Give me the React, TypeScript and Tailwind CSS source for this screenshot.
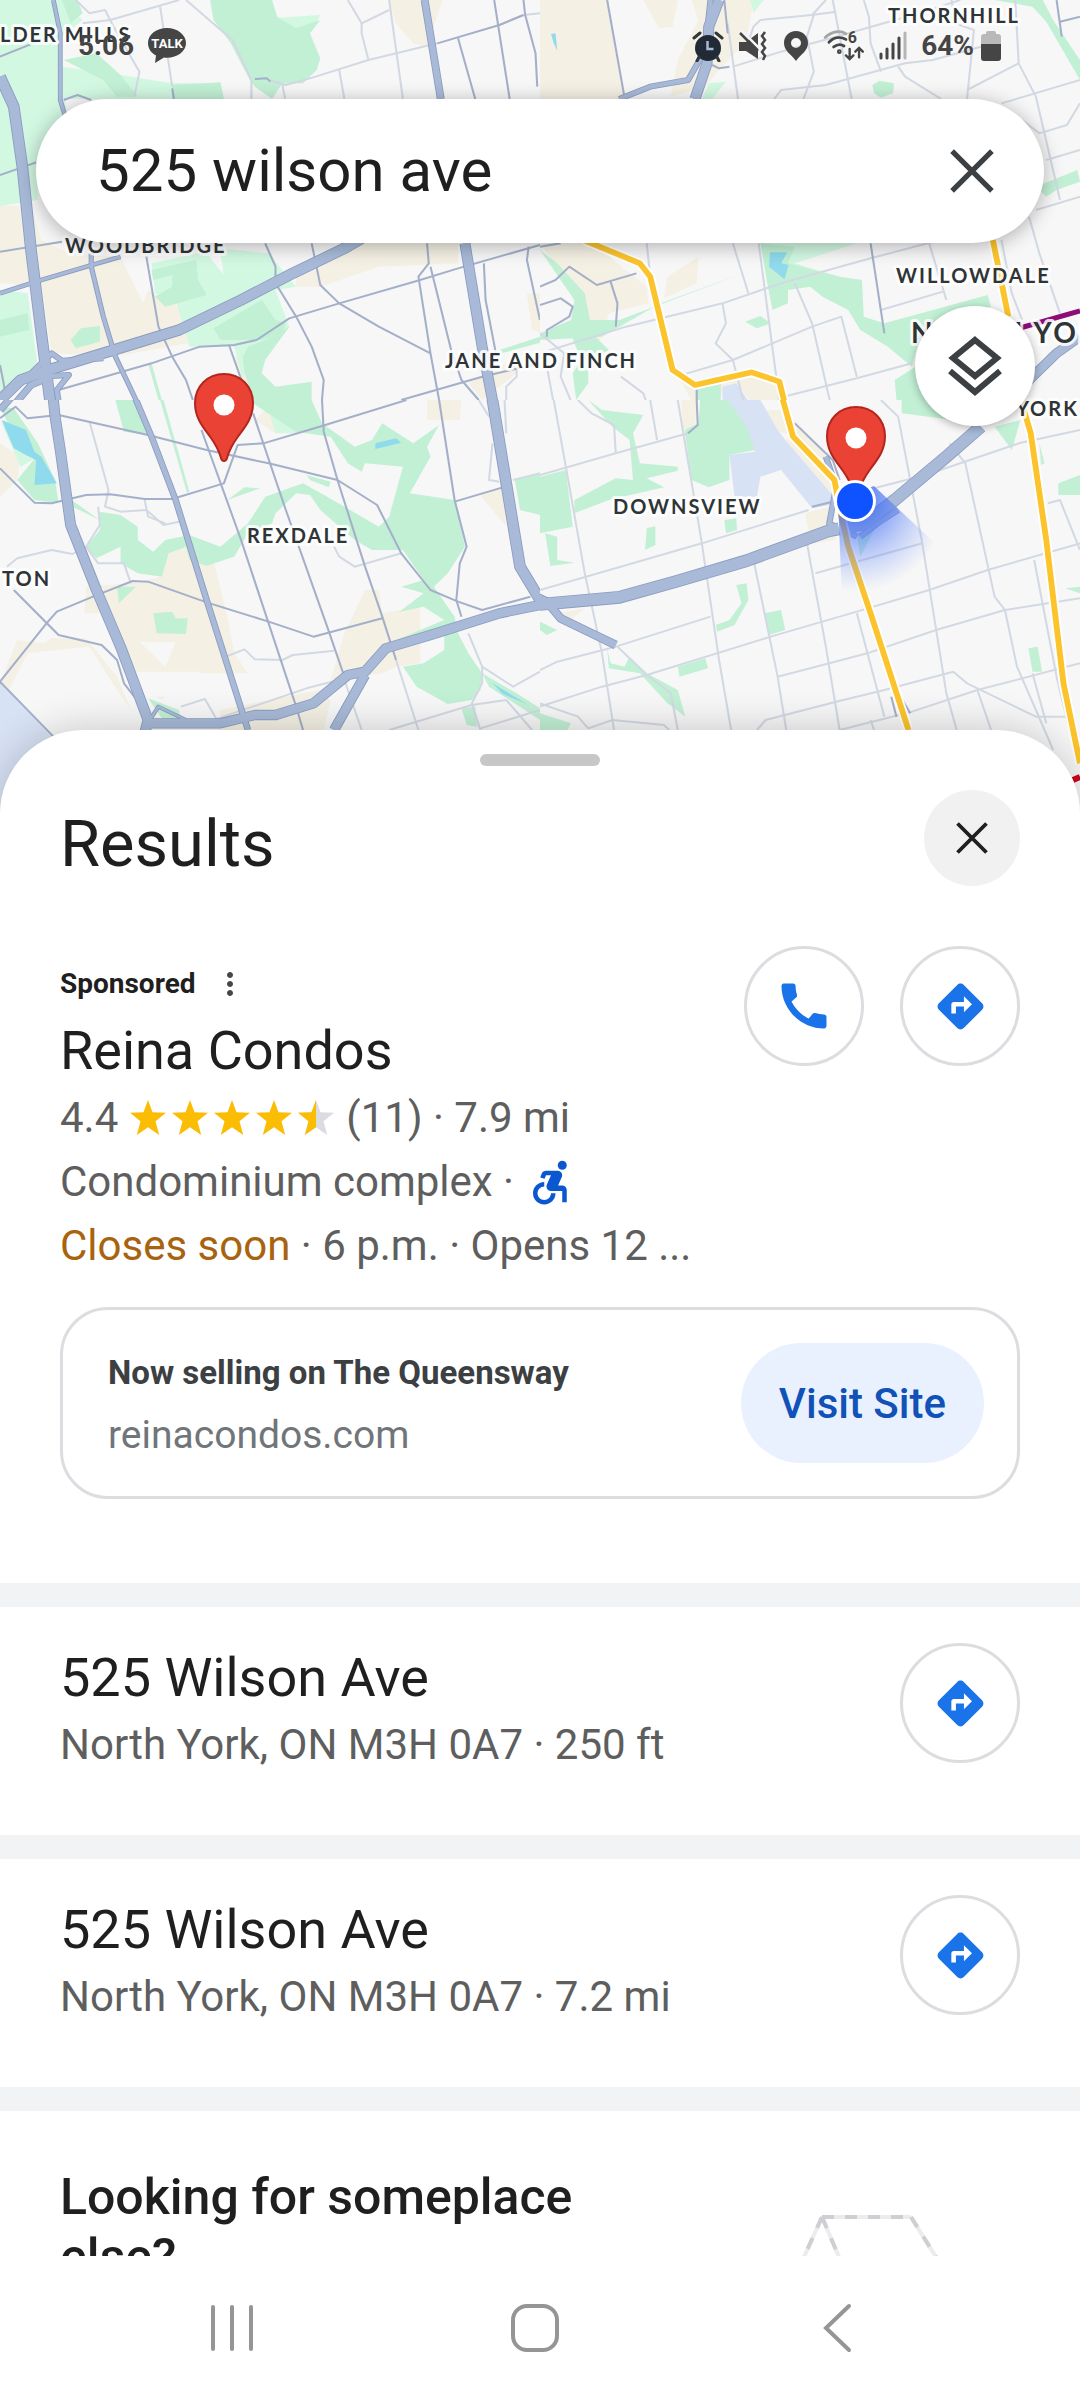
import type { ReactNode } from "react";
import { MdAccessibleForward, MdCall, MdDirections, MdMoreVert } from "react-icons/md";

type Tile = {
  x: number;
  y: number;
  beige: string[];
  pale: string[];
  green: string[];
  white?: string[];
  airport: string[];
  water: string[];
  local: string[];
  road: string[];
  highway: [string, number][];
  transit: string[];
};

// every tile covers 540x430 of the map and is drawn on a 1568x1290 grid
const tiles: Tile[] = [
  {
    x: 0,
    y: 0,
    beige: [
      "0,615 90,620 120,720 200,760 350,770 415,910 430,870 520,920 545,1030 330,1070 150,1060 120,860 0,850",
      "860,800 1030,730 1330,730 1330,790 1100,800 930,860 860,860",
      "1130,0 1285,0 1240,140 1200,130 1150,70",
      "1530,880 1568,880 1568,1000 1545,990",
      "1360,1150 1440,1100 1530,1075 1500,1120 1400,1200",
      "690,1060 740,1200 720,1200 680,1080",
    ],
    pale: [
      "0,0 180,0 240,60 180,110 180,200 290,215 500,250 640,250 650,297 190,297 190,350 130,420 105,520 110,600 0,618",
      "440,790 640,745 780,760 860,860 800,870 840,980 790,1050 720,1070 705,1140 680,1040 550,1040 510,900 450,880",
      "0,870 80,880 110,1100 50,1140 0,1180",
      "790,55 930,45 900,100 880,250 820,250 740,180",
    ],
    green: [
      "610,0 790,0 805,50 860,85 930,60 900,100 930,175 920,210 880,250 820,250 790,297 740,260 725,240 670,130 620,60",
      "180,0 225,0 240,40 205,70",
      "500,255 640,247 650,297 500,297",
      "185,180 280,160 350,225 400,290 340,290 300,240",
      "440,810 570,780 575,840 600,885 480,920 450,890 500,860 500,825 445,840",
      "620,985 760,900 800,960 830,970 820,1000 760,1020 640,1020",
      "705,1070 720,1040 770,1020 840,980 770,1080 760,1120 800,1160 905,1145 905,1290 740,1290 735,1200 710,1120",
      "205,1020 235,985 290,978 290,1025 220,1045",
      "0,960 80,940 85,990 0,1010",
      "430,1090 440,1090 470,1200 460,1200",
      "1450,1050 1568,1010 1568,1028 1450,1062",
    ],
    white: ["600,760 640,760 650,825", "360,770 425,770 415,910"],
    airport: [],
    water: [],
    local: [
      "220,0 260,40 305,30 330,80 385,180 405,215 390,290",
      "240,70 320,60 520,0",
      "540,0 675,120 730,240 730,297",
      "465,20 500,260",
      "780,240 830,255 900,235 1070,180 1270,130",
      "1450,75 1520,45 1568,40",
      "1010,0 1050,70 1130,30",
      "1050,70 1050,100 1070,180",
      "1130,0 1170,297",
      "985,210 1000,297",
      "820,255 828,297",
      "1500,1110 1500,1130 1470,1160 1470,1200",
    ],
    road: [
      "1270,130 1450,75 1520,45",
      "1330,115 1380,297",
      "1435,0 1480,297",
      "1520,0 1525,45 1555,160 1560,260",
      "740,237 775,235 785,245",
      "185,300 225,285 265,300",
      "0,170 145,110",
      "0,525 105,487",
      "0,755 180,725",
      "500,265 505,297",
      "425,770 460,980 500,1070 540,1140 560,1200",
      "770,730 800,800 800,850 860,950 905,1040 940,1140 935,1200",
      "905,730 930,855 985,910 1100,980 1250,1060",
      "170,1170 440,1090 580,1040 680,1035 745,1020 840,955 985,910 1220,840 1330,805 1568,735",
      "1240,730 1245,790 1215,830 1250,1060 1275,1200",
      "1250,800 1310,1050 1340,1140 1390,1200",
      "1405,790 1410,900 1440,1060",
      "1535,740 1530,780 1568,960",
      "1165,1200 1400,1130 1568,1090",
      "665,1035 735,1240",
      "0,1095 20,1200",
    ],
    highway: [
      ["155,0 175,100 175,300 190,350", 14],
      ["0,880 120,840 250,800 350,770", 14],
      ["265,760 265,800 300,950 335,1070 395,1200 410,1240", 15],
      ["1233,0 1280,297", 23],
      ["1350,730 1400,1040 1430,1200 1435,1240", 32],
      ["60,1150 120,1090 150,1060 180,1082 300,1075", 18],
      ["110,1130 200,1125 165,1170 175,1240", 18],
      ["125,1140 90,1155 20,1240", 22],
      ["0,230 40,320 65,500 90,750 120,1000 145,1200 150,1240", 34],
      ["0,1200 60,1140 140,1110 330,1050 520,990 700,900 850,820 1000,745 1050,715", 34],
    ],
    transit: [],
  },
  {
    x: 540,
    y: 0,
    beige: [
      "0,0 195,0 245,297 0,297",
      "300,0 400,0 385,80 345,85",
      "440,0 620,0 600,120 520,210 480,260 380,290 400,180 460,60",
      "0,730 130,730 170,745 310,860 315,910 200,940 180,1010 160,1040 130,1000 90,880 50,800",
      "370,830 460,770 455,850 360,895",
      "390,1110 450,1155 615,1117 695,1145 712,1240 640,1240 570,1150 500,1200 440,1200",
    ],
    pale: ["610,0 650,0 620,40", "490,250 540,245 500,297 470,297", "640,730 920,730 740,790 870,830 700,860"],
    green: [
      "640,730 740,740 720,790 870,830 935,840 940,950 1000,970 1300,885 1310,920 1110,980 1080,1100 1010,1040 930,990 895,930 820,890 785,860 720,870 720,910 675,930 660,850",
      "1030,1140 1090,1100 1120,1200 1035,1200",
      "80,980 150,1000 200,1050 140,1080 140,1150 105,1200 95,1120 120,1080",
      "0,750 50,790 130,880 145,960 230,960 590,820 350,910 180,1010 0,1020 0,1000 90,960 100,900",
      "595,965 640,948 670,970 630,985",
      "965,255 985,242 1028,250 1025,280 990,293 970,280",
      "1440,560 1560,510 1568,545 1500,570 1470,590",
      "1320,0 1460,0 1490,60 1568,180 1568,240 1470,65 1430,20",
      "455,1160 525,1150 525,1240 455,1240",
    ],
    airport: ["530,1240 530,1160 570,1150 630,1240"],
    water: ["668,757 718,757 700,790 722,795 710,838 665,800", "32,102 45,100 50,152 40,130"],
    local: [
      "600,140 620,80 640,60 790,45 860,35",
      "850,0 905,297",
      "795,45 775,110 795,215 765,297",
      "830,0 790,45",
      "940,0 955,50 960,130 990,215",
      "560,200 700,155 860,110 1100,40 1220,0",
      "680,297 700,270 830,255 1060,190 1140,180 1280,140",
      "1040,200 1060,230 1165,297",
      "1195,0 1205,70 1260,90 1240,297",
      "1380,0 1390,190 1440,290 1510,600",
      "1240,270 1390,190",
      "1340,310 1568,240",
      "1400,360 1450,400 1530,375 1568,310",
      "1470,480 1568,450",
      "1440,630 1568,590",
      "1420,650 1450,760 1510,940",
      "545,70 575,297",
      "1340,720 1370,880 1400,960",
      "560,730 605,880",
      "635,730 700,1240",
      "310,730 320,830",
      "1130,730 1180,900",
      "0,1060 250,980 530,910 700,850 960,775 1180,715",
      "740,850 790,970 850,1240",
      "530,910 540,970 510,1030 560,1080 600,1240",
      "560,1080 790,980 875,950 920,1130",
      "0,1000 70,1060 60,1130 105,1240",
      "990,930 1170,875",
      "690,1195 920,1135 1080,1090",
      "235,1130 300,1180 320,1240",
      "20,1100 45,1240",
      "395,1130 560,1080",
    ],
    road: [
      "195,0 245,290",
      "535,0 545,100",
      "500,195 520,205 550,200",
      "1500,0 1515,110",
      "1510,65 1568,50",
      "0,860 45,840 85,800 165,855 280,820",
      "205,845 225,910 220,980",
      "0,915 60,895 95,920 85,950 20,990 20,1010",
      "0,740 60,730",
      "455,1170 455,1240",
      "960,730 1000,1000",
    ],
    highway: [
      ["495,0 480,150 430,240 320,260 230,297", 18],
      ["520,0 490,80 485,190 450,297", 32],
      ["1568,1010 1500,1060 1430,1130 1330,1240", 30],
    ],
    transit: ["130,722 290,790 320,830 385,1110 450,1155 615,1117 695,1145 718,1240", "1315,720 1360,950"],
  },
  {
    x: 0,
    y: 400,
    beige: [
      "0,130 60,170 50,240 0,290",
      "250,560 380,550 470,530 490,460 540,430 620,480 660,650 680,760 720,820 550,820 470,900 400,860 300,640 245,640",
      "1060,570 1100,570 1110,640 1220,620 1220,790 1150,800 1110,820 960,840 1000,700",
      "0,850 50,720 130,730 150,715 250,715 340,830 380,930 340,870 260,740 80,760 20,880",
      "1240,0 1340,0 1335,60 1240,60",
      "1390,280 1460,260 1470,380",
      "640,930 930,870 960,900 940,990 640,990",
      "740,60 800,100 860,90 780,20",
    ],
    pale: ["780,30 840,40 870,100 800,100", "0,60 60,150 110,170 60,200"],
    green: [
      "0,20 40,25 110,130 160,240 170,310 100,300 50,240 105,170 60,150",
      "335,0 390,0 430,105 360,95",
      "465,0 475,0 550,275 543,278",
      "720,0 905,0 935,70 1030,140 1080,120 1110,70 1200,130 1275,75 1240,140 1250,170 1190,280 1320,300 1350,440 1300,520 1260,560 1320,650 1330,700 1360,760 1400,820 1395,870 1370,900 1300,912 1210,860 1170,800 1230,790 1290,750 1290,660 1230,620 1160,635 1230,580 1165,560 1230,540 1170,450 1080,450 1030,420 930,330 900,285 860,280 800,340 790,370 720,400 680,470 600,497 550,480 540,440 490,460 470,530 400,520 350,490 350,440 280,475 250,440 290,390 290,335 350,345 400,380 400,420 445,455 480,420 550,405 640,440 720,370 770,290 880,250 950,290 1100,380 1130,350 1170,200 1060,190 1050,215 1010,190 960,110 860,95",
      "445,640 500,635 510,655 545,655 540,702 455,700",
      "430,895 520,930 525,960 470,955",
      "1340,925 1380,920 1385,980 1355,975",
      "1495,240 1568,220 1568,345 1510,330",
      "1400,820 1500,880 1568,925 1568,960 1420,860",
      "660,300 710,262 755,265 700,285",
      "180,280 290,360 270,350 190,310",
      "340,560 395,560 345,610",
      "1150,720 1290,660 1300,680 1140,735",
      "890,225 960,245 955,262 900,240",
    ],
    white: ["405,725 510,727 480,800", "380,815 585,815 500,890 420,890"],
    airport: ["0,850 150,1010 0,1250"],
    water: [
      "5,60 75,90 100,155 120,170 165,250 100,255 105,180 75,165 40,145",
      "1090,130 1150,115 1165,128 1090,147",
      "1430,850 1530,912 1460,882",
    ],
    local: [
      "1150,780 1215,990",
      "1360,700 1400,800 1400,850 1370,910 1395,990",
      "1400,800 1490,860 1568,815",
      "1470,900 1545,990",
      "1130,990 1370,915 1470,900",
      "1000,840 1050,990",
      "1490,240 1568,220",
      "1465,0 1470,100",
      "1395,985 1568,930",
      "260,65 315,270 305,320 350,335 425,330 475,375 520,365",
      "285,320 290,375 250,440 285,490 360,490 380,550",
      "20,500 50,475 150,450 210,462 230,450",
      "420,300 430,350 480,370",
      "660,768 710,748 740,778 820,780 850,765 970,752",
      "970,440 985,470 1030,500 1165,460",
      "620,960 890,865 1060,820",
      "525,920 595,897 630,960",
      "1390,0 1420,50",
      "1430,130 1420,240 1450,245",
    ],
    road: [
      "0,55 45,20 80,55 170,45 430,105 600,150 780,190 980,240 1095,315 1165,460 1250,570 1330,605 1400,630 1540,590",
      "0,205 100,308 150,310 250,285 320,283 420,297 500,297 650,250 690,135 765,130 935,78 1180,0",
      "585,90 700,420 860,920 880,990",
      "735,40 830,330 950,680 1000,830",
      "935,0 940,95 980,240 1060,500 1110,650 1150,780",
      "1275,0 1320,300 1355,440 1335,490 1325,600 1340,650",
      "1320,305 1460,262",
      "0,845 135,670 165,635 270,590 385,543 430,545 600,607 780,665 910,710 1110,655",
      "40,570 170,705 295,735 340,780 360,850 420,930",
      "0,845 160,1015",
    ],
    highway: [
      ["60,-40 0,30", 22],
      ["380,-40 395,0 440,110 510,300 600,600 720,990", 19],
      ["410,1000 460,920 540,960", 12],
      ["150,-30 155,0 160,50 175,150 205,375 280,570 350,740 430,960 420,1000", 32],
      ["430,970 640,970 740,945 800,945 910,910 1010,825 1060,815 1120,745 1250,705 1450,640 1568,615", 31],
      ["1060,825 970,990", 30],
      ["1430,-20 1430,0 1470,250 1510,500 1580,620", 34],
    ],
    transit: [],
  },
  {
    x: 540,
    y: 400,
    beige: [
      "640,30 700,30 740,60 820,150 860,250 850,300 710,120 740,110 680,90",
      "770,340 840,320 860,420 790,430 775,370",
      "410,0 455,0 450,80 415,90",
      "50,640 130,625 90,660",
    ],
    pale: [],
    green: [
      "420,90 460,70 465,0 590,0 610,100 625,150 550,165 550,240 490,262 440,240",
      "140,0 180,30 300,45 270,100 290,190 400,200 400,212 310,235 360,262 200,300 100,340 100,300 220,235 270,240 260,120 210,80",
      "0,230 75,210 95,380 0,400",
      "15,400 50,410 50,480 100,488 30,498",
      "310,385 335,378 335,435 305,450",
      "535,360 570,355 572,390 540,400",
      "570,555 600,550 605,600 565,675 515,695 510,675 550,660 585,610",
      "650,640 700,630 712,690 665,705",
      "400,800 480,775 488,805 405,830",
      "195,745 205,790 245,800 260,770 310,820 400,870 422,950 370,910 290,820 200,805",
      "0,940 90,970 80,990 0,990",
      "1050,0 1180,0 1200,60 1050,40",
      "1320,80 1395,60 1370,150",
      "1505,250 1568,225 1568,285 1505,285",
      "1418,745 1445,740 1458,815 1430,815",
      "1525,565 1568,560 1568,580",
      "1450,130 1465,190 1455,195",
      "920,400 970,390 930,470",
      "0,665 50,690 20,705 0,690",
    ],
    airport: ["545,0 640,0 690,90 720,130 870,310 790,325 700,210 640,230 630,290 565,290 550,165 625,155 600,80"],
    water: [],
    local: [
      "40,0 75,200 130,520 180,760 215,990",
      "0,225 220,160 430,100",
      "400,0 470,430 520,780 555,990",
      "0,570 470,430 780,330",
      "110,0 150,40 215,75 220,160",
      "320,0 340,120",
      "0,810 50,785 220,740 495,650",
      "225,740 310,825 380,880 400,990",
      "0,920 180,860 310,825 670,710 920,635 1130,570 1300,510 1568,430",
      "620,480 690,830 715,990",
      "690,830 840,790 950,760 1150,690 1350,630 1568,595",
      "770,400 830,740 870,990",
      "800,520 1110,430",
      "990,0 1040,50 1110,430 1180,880 1210,990",
      "970,265 1120,225 1390,130 1568,90",
      "1190,130 1235,190 1320,590 1350,630 1385,800 1440,930 1490,1050",
      "630,990 655,960 860,905 1000,870 1200,815 1240,850 1440,950 1540,950",
      "870,990 1080,935 1270,870 1568,790",
      "920,640 1000,950",
      "1435,480 1500,830 1540,1000",
      "1270,870 1310,990",
      "0,910 110,950 140,985 210,960 360,975 375,990",
      "1475,310 1510,300 1568,450",
      "1430,820 1470,970",
      "960,960 970,990",
    ],
    road: [
      "455,0 458,75 430,100",
      "740,70 820,150 850,180 870,240",
      "790,320 850,305",
      "1020,890 1035,950",
      "1030,860 1075,940",
    ],
    highway: [
      ["830,170 860,260 840,370 920,410", 18],
      ["930,410 980,370 1040,330", 18],
      ["-20,585 20,605 60,655 150,700 220,735", 26],
      ["-10,614 100,604 230,592 400,543 600,482 840,392 940,372 1030,300 1180,170 1280,80", 38],
    ],
    transit: ["700,-20 735,110 855,240 875,350 895,440 960,640 1070,990", "1405,30 1425,100 1470,420 1520,850 1568,1090"],
  },
];

const labels: { text: string; x: number; y: number; big?: boolean }[] = [
  { text: "LDER MILLS", x: 0, y: 42 },
  { text: "THORNHILL", x: 888, y: 23 },
  { text: "WOODBRIDGE", x: 65, y: 253 },
  { text: "WILLOWDALE", x: 896, y: 283 },
  { text: "NORTH YORK", x: 911, y: 343, big: true },
  { text: "JANE AND FINCH", x: 445, y: 368 },
  { text: "YORK", x: 1016, y: 416 },
  { text: "DOWNSVIEW", x: 613, y: 514 },
  { text: "REXDALE", x: 247, y: 543 },
  { text: "TON", x: 2, y: 586 },
];

function MapTile({ tile }: { tile: Tile }) {
  return (
    <svg x={tile.x} y={tile.y} width="540" height="430" viewBox="0 0 1568 1290" preserveAspectRatio="none" fill="none" strokeLinejoin="round">
      <rect width="1568" height="1290" fill="#f7f7f7" />
      {tile.beige.map((p) => <polygon key={p} points={p} fill="#f4f0e4" />)}
      {tile.pale.map((p) => <polygon key={p} points={p} fill="#d2f8e2" />)}
      {tile.green.map((p) => <polygon key={p} points={p} fill="#c2f0d5" />)}
      {tile.white?.map((p) => <polygon key={p} points={p} fill="#f7f7f7" />)}
      {tile.airport.map((p) => <polygon key={p} points={p} fill="#d8e2f5" />)}
      {tile.water.map((p) => <polygon key={p} points={p} fill="#8fdaec" />)}
      {tile.local.map((p) => <polyline key={p} points={p} stroke="#d3d9e3" strokeWidth="6" />)}
      {tile.road.map((p) => <polyline key={p} points={p} stroke="#a4afc9" strokeWidth="6" />)}
      {tile.highway.map(([p, w]) => <polyline key={p} points={p} stroke="#8b9cc0" strokeWidth={w} />)}
      {tile.highway.map(([p, w]) => <polyline key={p} points={p} stroke="#a8bad8" strokeWidth={w - 5} />)}
      {tile.transit.map((p) => <polyline key={p} points={p} stroke="#ffffff" strokeWidth="28" />)}
      {tile.transit.map((p) => <polyline key={p} points={p} stroke="#fcc42c" strokeWidth="17" />)}
    </svg>
  );
}

function Pin({ x, y }: { x: number; y: number }) {
  return (
    <g transform={`translate(${x} ${y})`}>
      <path
        d="M0 -87C-17 -87 -29 -74 -29 -58C-29 -42 -20 -33 -13 -23C-8 -16 -5 -10 -3 -3C-2 1 2 1 3 -3C5 -10 8 -16 13 -23C20 -33 29 -42 29 -58C29 -74 17 -87 0 -87Z"
        fill="#ea4335"
        stroke="#b3261e"
        strokeWidth="2"
      />
      <circle cy="-56" r="10.5" fill="#fff" />
    </g>
  );
}

function MapView() {
  return (
    <svg className="absolute inset-0 h-full w-full" viewBox="0 0 1080 830" preserveAspectRatio="xMidYMin slice" role="img" aria-label="Map">
      <defs>
        <radialGradient id="beam" gradientUnits="userSpaceOnUse" cx="855" cy="500" r="92">
          <stop offset="0.2" stopColor="#3f6cf5" stopOpacity="0.75" />
          <stop offset="1" stopColor="#7f9dfa" stopOpacity="0" />
        </radialGradient>
      </defs>
      {tiles.map((t) => <MapTile key={t.x + "-" + t.y} tile={t} />)}
      <path d="M1020 328L1080 311" stroke="#8e0c78" strokeWidth="5" />
      <path d="M1073 780L1080 777" stroke="#d0021b" strokeWidth="6" />
      {labels.map((l) => (
        <text
          key={l.text}
          x={l.x}
          y={l.y}
          fill="#2f3437"
          stroke="#fff"
          strokeOpacity="0.85"
          strokeWidth="6"
          strokeLinejoin="round"
          paintOrder="stroke"
          className={l.big ? "font-[Lato] text-[28px] font-bold tracking-widest" : "font-[Lato] text-[20px] font-bold tracking-widest"}
        >
          {l.text}
        </text>
      ))}
      <Pin x={224} y={461} />
      <Pin x={856} y={494} />
      <path d="M838 500L842 600L900 600L940 548L874 486Z" fill="url(#beam)" />
      <circle cx="855" cy="501" r="21" fill="#fff" />
      <circle cx="855" cy="501" r="18" fill="#0f52ff" />
    </svg>
  );
}

function StatusBar() {
  return (
    <div className="relative flex h-[99px] items-start justify-between px-[78px] pt-7 font-[Roboto] text-[28px] leading-9 font-bold text-[#454545]">
      <div className="flex gap-3.5">
        <span>5:06</span>
        <svg width="38" height="36" viewBox="0 0 38 36">
          <path d="M19 0C8.500 0 0 6.500 0 15c0 5.500 3.300 10 8 12.500L7 35l9-5.500c1 .1 2 .2 3 .2 10.500 0 19-6.500 19-14.700S29.500 0 19 0Z" fill="#454545" />
          <text x="19" y="20" textAnchor="middle" fill="#fff" className="font-[Roboto] text-[13px] font-bold">TALK</text>
        </svg>
      </div>
      <div className="flex gap-3.5">
        <svg className="mt-0.5" width="32" height="32" viewBox="0 0 32 32">
          <circle cx="16" cy="18" r="13" fill="#222a35" />
          <path d="M2 8l6-5M30 8l-6-5M7 27l-2 4M25 27l2 4" stroke="#33373d" strokeWidth="3" strokeLinecap="round" />
          <path d="M15.500 11v8h6" stroke="#a8bad8" strokeWidth="2.500" fill="none" />
        </svg>
        <svg className="mt-0.5" width="31" height="32" viewBox="0 0 31 32" fill="none" stroke="#454545" strokeWidth="2.500">
          <path d="M1 12h7L20 3v26L8 21H1Z" fill="#454545" stroke="none" />
          <path d="M3 0l22 22" stroke="#f5f5f5" strokeWidth="2.500" />
          <path d="M2 3l18 18" />
          <path d="M27 2l-3 4 3 4-3 4 3 4-3 4 3 4-2 4" />
        </svg>
        <svg className="mt-0.5" width="26" height="32" viewBox="0 0 26 32">
          <path fillRule="evenodd" d="M13 1C6 1 1 6 1 13c0 8 7 11 12 18 5-7 12-10 12-18C25 6 20 1 13 1Zm0 7a5 5 0 1 1 0 10 5 5 0 0 1 0-10Z" fill="#454545" />
        </svg>
        <svg className="mt-0.5" width="42" height="32" viewBox="0 0 44 34" fill="none" stroke="#454545" strokeWidth="3" strokeLinecap="round">
          <path d="M2 8C10 0 20 1 24 4" stroke="#a6a6a6" />
          <path d="M6 13c6-6 13-6 18-3M11 18c4-3 8-3 11-1" />
          <circle cx="17" cy="23" r="1" />
          <path d="M28 20v10m-4-3l4 4 4-4M38 29V19m-4 4l4-4 4 4" strokeWidth="2.500" />
          <text x="26" y="14" fill="#454545" stroke="none" className="font-[Roboto] text-[17px] font-bold">6</text>
        </svg>
        <svg className="mt-0.5" width="28" height="32" viewBox="0 0 28 32" stroke="#454545" strokeWidth="3" strokeLinecap="round">
          <path d="M2 28v-4M8 28v-9M14 28V14M20 28V8" />
          <path d="M26 28V3" stroke="#b5b5b5" />
        </svg>
        <div className="flex gap-1.5">
          <span>64%</span>
          <svg className="mt-0.5" width="22" height="32" viewBox="0 0 22 32">
            <path d="M6 3q0-2 2-2h6q2 0 2 2v1h2q3 0 3 3v8H1V7q0-3 3-3h2Z" fill="#b9b9b9" />
            <path d="M1 14h20v14q0 3-3 3H4q-3 0-3-3Z" fill="#454545" />
          </svg>
        </div>
      </div>
    </div>
  );
}

function CloseIcon({ size, className }: { size: number; className: string }) {
  return (
    <svg width={size} height={size} viewBox="0 0 42 42" className={className} fill="none" stroke="currentColor" strokeWidth="5">
      <path d="M2 2l38 38M40 2L2 40" />
    </svg>
  );
}

function RoundButton({ label, children }: { label: string; children: ReactNode }) {
  return (
    <button aria-label={label} className="flex size-30 shrink-0 items-center justify-center rounded-full border-3 border-[#dcdde0] bg-white text-[#1a73e8]">
      {children}
    </button>
  );
}

const starPath = "M18 0L22.500 12.200 36 12.800 25.500 21.200 29.200 35 18 27.200 6.800 35 10.500 21.200 0 12.800 13.500 12.200Z";

function Stars() {
  return (
    <span className="flex gap-1.5">
      {[1, 2, 3, 4].map((n) => (
        <svg key={n} width="36" height="36" viewBox="0 0 36 36">
          <path d={starPath} fill="#fbbc04" />
        </svg>
      ))}
      <svg width="36" height="36" viewBox="0 0 36 36">
        <path d={starPath} fill="#dadce0" />
        <path d="M18 0V27.200L6.800 35 10.500 21.200 0 12.800 13.500 12.200Z" fill="#fbbc04" />
      </svg>
    </span>
  );
}

function AddressResult({ title, detail }: { title: string; detail: string }) {
  return (
    <section className="flex items-start justify-between border-t-24 border-[#f1f3f5] px-15 pt-9 pb-[58px]">
      <div>
        <h2 className="text-[54px] leading-[70px]">{title}</h2>
        <p className="text-[42px] leading-[64px] text-[#5e5e5e]">{detail}</p>
      </div>
      <RoundButton label="Directions">
        <MdDirections size={55} />
      </RoundButton>
    </section>
  );
}

export default function App() {
  return (
    <div className="flex h-screen flex-col overflow-hidden bg-white font-[Roboto,sans-serif] text-[#1f1f1f]">
      <header className="relative h-[830px] shrink-0">
        <MapView />
        <StatusBar />
        <form className="relative mx-9 flex h-36 items-center rounded-full bg-white pr-[50px] pl-15 shadow-[0_3px_20px_rgba(0,0,0,0.3)]">
          <input
            type="text"
            aria-label="Search"
            defaultValue="525 wilson ave"
            className="min-w-0 flex-1 bg-transparent text-[60px] leading-[72px] outline-none"
          />
          <button type="button" aria-label="Clear search">
            <CloseIcon size={44} className="text-[#3c4043]" />
          </button>
        </form>
        <button aria-label="Layers" className="absolute top-[306px] right-[45px] flex size-30 items-center justify-center rounded-full bg-white text-[#3c4043] shadow-[0_2px_8px_rgba(0,0,0,0.3)]">
          <svg width="54" height="60" viewBox="0 0 54 60" fill="none" stroke="currentColor" strokeWidth="6">
            <path d="M27 4L49 22 27 40 5 22Z" />
            <path d="M2 35l25 21 25-21" />
          </svg>
        </button>
      </header>

      <main className="relative -mt-25 min-h-0 flex-1 overflow-hidden rounded-t-[84px] bg-white pt-6 shadow-[0_0_40px_rgba(0,0,0,0.2)]">
        <div className="mx-auto h-3 w-30 rounded-full bg-[#c7c7c7]" />
        <div className="mt-6 flex h-24 items-center justify-between px-15">
          <h1 className="pt-3 text-[65px] leading-[72px]">Results</h1>
          <button aria-label="Close results" className="flex size-24 items-center justify-center rounded-full bg-[#f1f1f1]">
            <CloseIcon size={32} className="text-[#1f1f1f]" />
          </button>
        </div>

        <section className="px-15 pt-15 pb-21">
          <div className="flex items-start justify-between">
            <div className="pt-[18px]">
              <div className="flex items-center gap-4 text-[28px] leading-10 font-bold">
                Sponsored
                <button aria-label="About this ad">
                  <MdMoreVert size={36} className="text-[#444746]" />
                </button>
              </div>
              <h2 className="mt-3 text-[54px] leading-[70px]">Reina Condos</h2>
            </div>
            <div className="flex gap-9">
              <RoundButton label="Call">
                <MdCall size={60} />
              </RoundButton>
              <RoundButton label="Directions">
                <MdDirections size={55} />
              </RoundButton>
            </div>
          </div>
          <div className="text-[42px] leading-[64px] text-[#5e5e5e]">
            <div className="flex items-center gap-3">
              <span>4.4</span>
              <Stars />
              <span>(11) · 7.9 mi</span>
            </div>
            <div className="flex items-center gap-2.5">
              <span>Condominium complex ·</span>
              <MdAccessibleForward size={54} className="text-[#0b57d0]" aria-label="Wheelchair accessible" />
            </div>
            <p>
              <span className="text-[#a8630f]">Closes soon</span> · 6 p.m. · Opens 12 ...
            </p>
          </div>

          <div className="mt-[29px] flex h-48 items-center justify-between rounded-[48px] border-3 border-[#dcdde0] pr-[33px] pl-[45px]">
            <div>
              <p className="text-[33px] leading-[64px] font-bold text-[#3c4043]">Now selling on The Queensway</p>
              <p className="text-[39px] leading-[60px] text-[#70757a]">reinacondos.com</p>
            </div>
            <a href="#" className="flex h-30 items-center rounded-full bg-[#e9f1fe] px-[38px] text-[42px] font-medium text-[#1151b8]">
              Visit Site
            </a>
          </div>
        </section>

        <AddressResult title="525 Wilson Ave" detail="North York, ON M3H 0A7 · 250 ft" />
        <AddressResult title="525 Wilson Ave" detail="North York, ON M3H 0A7 · 7.2 mi" />

        <section className="flex items-start justify-between border-t-24 border-[#f1f3f5] px-15 pt-14">
          <h2 className="w-[560px] text-[50px] leading-[60px] font-medium">Looking for someplace else?</h2>
          <svg width="240" height="180" viewBox="0 0 240 180" fill="none" strokeWidth="4">
            <path d="M42 50H131M42 50L6 130M42 50L76 130M131 50L181 130" stroke="#ececef" />
            <path d="M42 50H131M42 50L6 130M42 50L76 130M131 50L181 130" stroke="#cfcfd3" strokeDasharray="12 11" />
          </svg>
        </section>
      </main>

      <nav className="relative flex h-36 shrink-0 items-center justify-between bg-white pr-[217px] pl-[207px] text-[#959595]">
        <button aria-label="Recent apps">
          <svg width="50" height="50" viewBox="0 0 50 50" fill="none" stroke="currentColor" strokeWidth="4" strokeLinecap="round">
            <path d="M6 4v42M25 4v42M44 4v42" />
          </svg>
        </button>
        <button aria-label="Home">
          <svg width="50" height="50" viewBox="0 0 50 50" fill="none" stroke="currentColor" strokeWidth="4">
            <rect x="3" y="3" width="44" height="44" rx="14" />
          </svg>
        </button>
        <button aria-label="Back">
          <svg width="50" height="50" viewBox="0 0 50 50" fill="none" stroke="currentColor" strokeWidth="4" strokeLinecap="round">
            <path d="M36 3L13 25l23 22" />
          </svg>
        </button>
      </nav>
    </div>
  );
}
